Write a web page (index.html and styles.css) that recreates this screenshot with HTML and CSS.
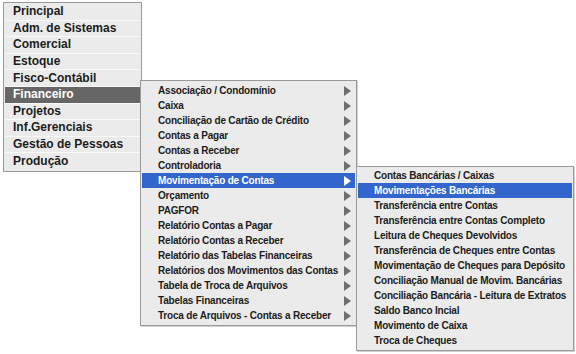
FILE: index.html
```html
<!DOCTYPE html>
<html lang="pt">
<head>
<meta charset="utf-8">
<link rel="stylesheet" href="styles.css">
</head>
<body>
<div class="stage">
  <ul class="menu main">
    <li class="item">Principal</li>
    <li class="item">Adm. de Sistemas</li>
    <li class="item">Comercial</li>
    <li class="item">Estoque</li>
    <li class="item">Fisco-Contábil</li>
    <li class="item active">Financeiro</li>
    <li class="item">Projetos</li>
    <li class="item">Inf.Gerenciais</li>
    <li class="item">Gestão de Pessoas</li>
    <li class="item">Produção</li>
  </ul>
  <ul class="menu sub sub1">
    <li class="item">Associação / Condomínio<span class="arr"></span></li>
    <li class="item">Caixa<span class="arr"></span></li>
    <li class="item">Conciliação de Cartão de Crédito<span class="arr"></span></li>
    <li class="item">Contas a Pagar<span class="arr"></span></li>
    <li class="item">Contas a Receber<span class="arr"></span></li>
    <li class="item">Controladoria<span class="arr"></span></li>
    <li class="item sel">Movimentação de Contas<span class="arr"></span></li>
    <li class="item">Orçamento<span class="arr"></span></li>
    <li class="item">PAGFOR<span class="arr"></span></li>
    <li class="item">Relatório Contas a Pagar<span class="arr"></span></li>
    <li class="item">Relatório Contas a Receber<span class="arr"></span></li>
    <li class="item">Relatório das Tabelas Financeiras<span class="arr"></span></li>
    <li class="item">Relatórios dos Movimentos das Contas<span class="arr"></span></li>
    <li class="item">Tabela de Troca de Arquivos<span class="arr"></span></li>
    <li class="item">Tabelas Financeiras<span class="arr"></span></li>
    <li class="item">Troca de Arquivos - Contas a Receber<span class="arr"></span></li>
  </ul>
  <ul class="menu sub sub2">
    <li class="item">Contas Bancárias / Caixas</li>
    <li class="item sel">Movimentações Bancárias</li>
    <li class="item">Transferência entre Contas</li>
    <li class="item">Transferência entre Contas Completo</li>
    <li class="item">Leitura de Cheques Devolvidos</li>
    <li class="item">Transferência de Cheques entre Contas</li>
    <li class="item">Movimentação de Cheques para Depósito</li>
    <li class="item">Conciliação Manual de Movim. Bancárias</li>
    <li class="item">Conciliação Bancária - Leitura de Extratos</li>
    <li class="item">Saldo Banco Incial</li>
    <li class="item">Movimento de Caixa</li>
    <li class="item">Troca de Cheques</li>
  </ul>
</div>
</body>
</html>
```
FILE: styles.css
```css
* { box-sizing: border-box; }
html, body { margin: 0; padding: 0; background: #ffffff; }
body {
  width: 576px;
  height: 354px;
  overflow: hidden;
  font-family: "Liberation Sans", Arial, sans-serif;
  font-weight: bold;
  color: #1c1c1c;
}
.stage { position: relative; width: 576px; height: 354px; }
.menu {
  list-style: none;
  margin: 0;
  padding: 0;
  background: #ebebeb;
  border: 1px solid #9a9a9a;
  display: flex;
  flex-direction: column;
}
.main {
  position: absolute;
  left: 3px;
  top: 2px;
  width: 139px;
  padding: 1px;
}
.main .item {
  height: 16.6px;
  font-size: 12px;
  line-height: 15px;
  padding-left: 8px;
  border-bottom: 1px solid #fafafa;
  display: flex;
  align-items: center;
}
.main .item:last-child { border-bottom: none; }
.main .item.active { background: #666666; color: #ffffff; }
.sub {
  position: absolute;
  padding: 2px 1px;
  box-shadow: 1px 1px 0 #d0d0d0;
}
.sub1 { left: 140px; top: 80px; width: 217px; }
.sub2 { left: 356px; top: 166px; width: 218px; padding-top: 1px; }
.sub .item {
  height: 15px;
  font-size: 10px;
  letter-spacing: -0.2px;
  line-height: 15px;
  padding-left: 16px;
  display: flex;
  align-items: center;
  justify-content: space-between;
  white-space: nowrap;
}
.sub .item.sel { background: #3366cc; color: #ffffff; }
.arr {
  width: 0;
  height: 0;
  margin-right: 4px;
  border-top: 5px solid transparent;
  border-bottom: 5px solid transparent;
  border-left: 7px solid #6e6e6e;
}
.sel .arr { border-left-color: #ffffff; }
```
